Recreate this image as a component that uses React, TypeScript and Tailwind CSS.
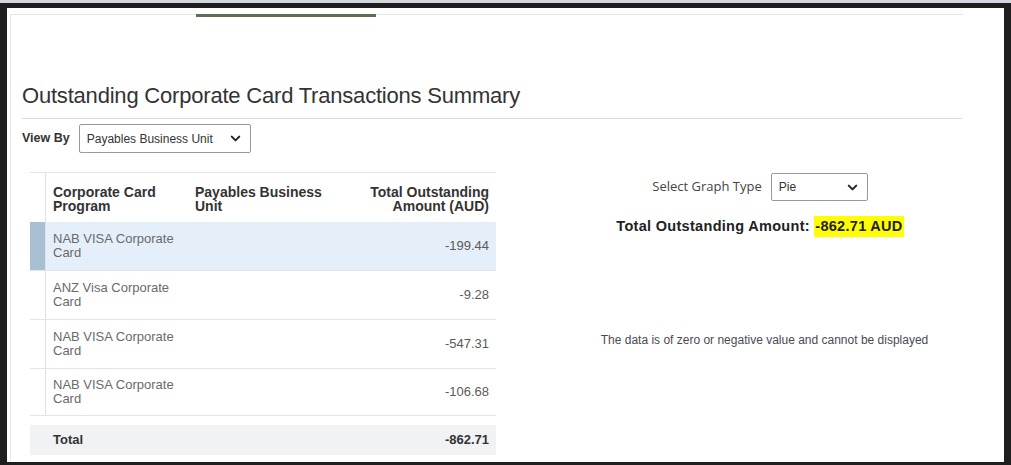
import { ChevronDown } from 'lucide-react';

type Row = { program: string; amount: string; h: string; selected?: boolean };

const rows: Row[] = [
    { program: 'NAB VISA Corporate Card', amount: '-199.44', h: 'h-[49px]', selected: true },
    { program: 'ANZ Visa Corporate Card', amount: '-9.28', h: 'h-[49px]' },
    { program: 'NAB VISA Corporate Card', amount: '-547.31', h: 'h-[49px]' },
    { program: 'NAB VISA Corporate Card', amount: '-106.68', h: 'h-[47px]' },
];

function Select({ value, className }: { value: string; className: string }) {
    return (
        <div
            className={`flex items-center justify-between border border-[#9a9a9a] rounded-[2px] bg-white pl-[7px] pr-[7px] text-[12px] text-[#333] ${className}`}
        >
            <span>{value}</span>
            <ChevronDown size={15} strokeWidth={3.2} className="text-[#222]" />
        </div>
    );
}

function SummaryTable() {
    return (
        <div className="w-[466px] font-['Liberation_Sans',Arial,sans-serif]">
            {/* header */}
            <div className="flex h-[50px] border-t border-[#e3e4e6]">
                <div className="w-[16px] border-r border-[#dfe1e4]" />
                <div className="w-[142px] pl-[7px] pt-[12px] text-[14px] leading-[14px] font-bold text-[#333]">
                    Corporate Card
                    <br />
                    Program
                </div>
                <div className="w-[142px] pl-[7px] pt-[12px] text-[14px] leading-[14px] font-bold text-[#333]">
                    Payables Business
                    <br />
                    Unit
                </div>
                <div className="flex-1 pr-[7px] pt-[12px] text-right text-[14px] leading-[14px] font-bold text-[#333]">
                    Total Outstanding
                    <br />
                    Amount (AUD)
                </div>
            </div>

            {rows.map((r, i) => (
                <div
                    key={i}
                    className={`flex ${r.h} border-b border-[#e3e4e6] ${r.selected ? 'bg-[#e4effa]' : 'bg-white'}`}
                >
                    <div
                        className={`w-[16px] border-r border-[#dfe1e4] ${r.selected ? 'bg-[#a9c0d2]' : ''}`}
                    />
                    <div className="w-[142px] pl-[7px] flex items-center text-[13px] leading-[14px] text-[#6a6a6a]">
                        <span className="w-[125px]">{r.program}</span>
                    </div>
                    <div className="w-[142px]" />
                    <div className="flex-1 pr-[7px] flex items-center justify-end text-[13px] text-[#5a5a5a]">
                        {r.amount}
                    </div>
                </div>
            ))}

            {/* total */}
            <div className="mt-[9px] flex h-[30px] items-center justify-between bg-[#f1f2f4] pl-[23px] pr-[7px] text-[13px] font-bold text-[#333]">
                <span>Total</span>
                <span>-862.71</span>
            </div>
        </div>
    );
}

function GraphPanel() {
    return (
        <div className="ml-[44px] mt-px w-[440px] flex flex-col items-center font-['Liberation_Sans',Arial,sans-serif]">
            <div className="flex items-center gap-[9px]">
                <span className="font-['Open_Sans',sans-serif] text-[13px] text-[#444]">Select Graph Type</span>
                <Select value="Pie" className="w-[97px] h-[28px]" />
            </div>
            <div className="mt-[15px] flex items-center text-[14.5px] tracking-[0.3px] font-bold text-[#222]">
                <span>Total Outstanding Amount:&nbsp;</span>
                <span className="bg-[#ffff00] h-[21px] px-px flex items-center">-862.71 AUD</span>
            </div>
            <div className="mt-[93px] pl-[9px] text-[12px] text-[#4a4a55]">
                The data is of zero or negative value and cannot be displayed
            </div>
        </div>
    );
}

export default function App() {
    return (
        <div className="w-[1011px] h-[465px] bg-[#1e1e1e] border-t-[3px] border-[#d2d7de] px-[7px] pt-[5px] pb-[3px]">
            <div className="h-full bg-white pl-[3px] pt-[7px]">
                <div className="h-full border-l border-[#e4e6e9]">
                    {/* tab strip line */}
                    <div className="w-[952px] h-px bg-[#e4e6e9]">
                        <div className="ml-[185px] -mt-px w-[180px] h-[3px] bg-[#5b6e51]" />
                    </div>

                    <div className="pl-[11px] mt-[68px] w-[951px]">
                        <div className="border-b border-[#dcdcdc] pb-[9px] text-[22px] leading-[26px] tracking-[-0.2px] text-[#333] font-['Liberation_Sans',Arial,sans-serif]">
                            Outstanding Corporate Card Transactions Summary
                        </div>
                    </div>

                    <div className="pl-[11px] mt-[5px] flex items-center gap-[9px] font-['Liberation_Sans',Arial,sans-serif]">
                        <span className="text-[12.5px] font-bold text-[#333]">View By</span>
                        <Select value="Payables Business Unit" className="w-[172px] h-[29px]" />
                    </div>

                    <div className="mt-[19px] pl-[19px] flex items-start">
                        <SummaryTable />
                        <GraphPanel />
                    </div>
                </div>
            </div>
        </div>
    );
}
